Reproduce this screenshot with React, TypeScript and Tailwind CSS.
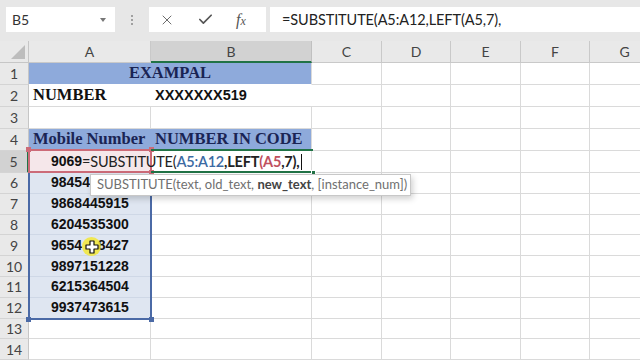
import { X, Check } from "lucide-react";

const cols = [
  { label: "A", w: "w-[122px]" },
  { label: "B", w: "w-[161px]" },
  { label: "C", w: "w-[70px]" },
  { label: "D", w: "w-[69px]" },
  { label: "E", w: "w-[70px]" },
  { label: "F", w: "w-[69px]" },
  { label: "G", w: "w-[70px]" },
];

const serif = "font-['Liberation_Serif',serif] font-bold text-[16.5px]";

function RowHead({ n, active }: { n: number; active?: boolean }) {
  return (
    <div
      className={
        "w-[29px] shrink-0 flex items-center justify-center border-b border-[#d4d4d4] text-[14px] text-[#444] " +
        (active
          ? "bg-[#d2d2d2] border-r-2 border-r-[#217346]"
          : "bg-[#e9e9e9] border-r border-r-[#c6c6c6]")
      }
    >
      {n}
    </div>
  );
}

function EmptyCells({ from = 2 }: { from?: number }) {
  return (
    <>
      {cols.slice(from).map((c) => (
        <div
          key={c.label}
          className={c.w + " shrink-0 border-r border-b border-[#dadada]"}
        />
      ))}
    </>
  );
}

function Row({
  n,
  tall,
  active,
  children,
}: {
  n: number;
  tall?: boolean;
  active?: boolean;
  children?: React.ReactNode;
}) {
  return (
    <div className={"flex " + (tall ? "h-[22px]" : "h-[20.8px]")}>
      <RowHead n={n} active={active} />
      {children}
      <EmptyCells />
    </div>
  );
}

function NumCell({ children }: { children: React.ReactNode }) {
  return (
    <div className="w-[122px] shrink-0 bg-[#dfe6f1] border-r border-b border-[#cfd8e6] flex items-center pl-[22px] font-['Liberation_Sans',sans-serif] font-bold text-[14px] text-[#111]">
      {children}
    </div>
  );
}

function Blank({ w = "w-[161px]" }: { w?: string }) {
  return <div className={w + " shrink-0 border-r border-b border-[#dadada]"} />;
}

// row 9 has two digits hidden under the mouse pointer
const numbers = ["98454", "9868445915", "6204535300", "9654_8427", "9897151228", "6215364504", "9937473615"];

export default function App() {
  return (
    <div className="relative w-[640px] h-[360px] overflow-hidden bg-white select-none font-['Lato',sans-serif]">
      {/* formula bar */}
      <div className="h-[41px] bg-[#e7e7e7] flex items-start pt-[7px] pl-[6px]">
        <div className="w-[109px] h-[25px] bg-white flex items-center justify-between px-[6px] text-[14px] text-[#333]">
          <span>B5</span>
          <span className="w-0 h-0 border-l-[3.5px] border-r-[3.5px] border-t-[4px] border-l-transparent border-r-transparent border-t-[#777] mr-[3px]" />
        </div>
        <div className="w-[34px] h-[25px] flex flex-col items-center justify-center gap-[2px]">
          <span className="w-[2px] h-[2px] bg-[#a0a0a0]" />
          <span className="w-[2px] h-[2px] bg-[#a0a0a0]" />
          <span className="w-[2px] h-[2px] bg-[#a0a0a0]" />
        </div>
        <div className="w-[117px] h-[25px] bg-white flex items-center pl-[10px] gap-[22px]">
          <X size={16} strokeWidth={1.3} className="text-[#555]" />
          <Check size={17} strokeWidth={2.4} className="text-[#555]" />
          <span className="font-['Liberation_Serif',serif] italic text-[16px] text-[#555]">
            f<span className="text-[12px]">x</span>
          </span>
        </div>
        <div className="ml-[4px] flex-1 h-[25px] bg-white flex items-center pl-[12px] text-[14.5px] text-[#222] tracking-[-0.1px]">
          =SUBSTITUTE(A5:A12,LEFT(A5,7),
        </div>
      </div>

      {/* column headers */}
      <div className="flex h-[22px]">
        <div className="w-[29px] shrink-0 bg-[#e9e9e9] border-r border-b border-[#c6c6c6] flex items-end justify-end p-[3px]">
          <svg width="14" height="14" viewBox="0 0 14 14">
            <polygon points="14,0 14,14 0,14" fill="#bdbdbd" />
          </svg>
        </div>
        {cols.map((c) => (
          <div
            key={c.label}
            className={
              c.w +
              " shrink-0 flex items-center justify-center text-[14px] text-[#444] " +
              (c.label === "B"
                ? "bg-[#d2d2d2] border-b-2 border-[#217346] border-r border-r-[#c0c0c0]"
                : "bg-[#e9e9e9] border-r border-b border-[#c9c9c9]")
            }
          >
            {c.label}
          </div>
        ))}
      </div>

      {/* rows */}
      <Row n={1} tall>
        <div className={"w-[283px] shrink-0 bg-[#8eaadb] border-r border-[#dadada] border-b border-b-white flex items-center justify-center text-[#1a2454] " + serif}>
          EXAMPAL
        </div>
      </Row>
      <Row n={2} tall>
        <div className={"w-[122px] shrink-0 border-b border-[#dadada] flex items-center pl-[4px] text-[#111] " + serif}>
          NUMBER
        </div>
        <div className="w-[161px] shrink-0 border-b border-[#dadada] flex items-center pl-[4px] font-['Liberation_Sans',sans-serif] font-bold text-[14.5px] text-[#111]">
          XXXXXXX519
        </div>
      </Row>
      <Row n={3} tall>
        <Blank w="w-[122px]" />
        <Blank />
      </Row>
      <Row n={4} tall>
        <div className={"w-[122px] shrink-0 bg-[#8eaadb] border-b border-[#dadada] flex items-center pl-[4px] text-[#1a2454] whitespace-nowrap " + serif}>
          Mobile Number
        </div>
        <div className={"w-[161px] shrink-0 bg-[#8eaadb] border-r border-b border-[#dadada] flex items-center pl-[4px] text-[#1a2454] whitespace-nowrap " + serif}>
          NUMBER IN CODE
        </div>
      </Row>
      <Row n={5} tall active>
        <div className="w-[122px] shrink-0 bg-[#f5e7ea] border-r border-b border-[#dadada] flex items-center pl-[22px] font-['Liberation_Sans',sans-serif] font-bold text-[14px] text-[#111]">
          9069
        </div>
        <Blank />
      </Row>
      {numbers.map((num, i) => (
        <Row key={num} n={6 + i}>
          <NumCell>
            {num.includes("_") ? (
              <>
                {num.split("_")[0]}
                <span className="inline-block w-[15.6px]" />
                {num.split("_")[1]}
              </>
            ) : (
              num
            )}
          </NumCell>
          <Blank />
        </Row>
      ))}
      <Row n={13}>
        <Blank w="w-[122px]" />
        <Blank />
      </Row>
      <Row n={14}>
        <Blank w="w-[122px]" />
        <Blank />
      </Row>

      {/* range highlight A5:A12 (blue) */}
      <div className="absolute left-[28px] top-[172px] w-[124px] h-[148px] border-2 border-t-0 border-[#4b6aa6] pointer-events-none">
        <span className="absolute -right-[4px] -bottom-[4px] w-[5px] h-[5px] bg-[#4b6aa6]" />
        <span className="absolute -left-[4px] -bottom-[4px] w-[5px] h-[5px] bg-[#4b6aa6]" />
      </div>
      {/* range highlight A5 (red) */}
      <div className="absolute left-[28px] top-[149px] w-[124px] h-[24px] border-2 border-[#cc6b78] pointer-events-none">
        <span className="absolute -left-[4px] -top-[4px] w-[5px] h-[5px] bg-[#cc6b78]" />
        <span className="absolute -right-[4px] -top-[4px] w-[5px] h-[5px] bg-[#cc6b78]" />
        <span className="absolute -right-[4px] -bottom-[4px] w-[5px] h-[5px] bg-[#cc6b78]" />
      </div>
      {/* active cell B5 */}
      <div className="absolute left-[151px] top-[149px] w-[162px] h-[24px] border-y-2 border-[#217346] pointer-events-none">
        <span className="absolute -right-[3px] -bottom-[4px] w-[5px] h-[5px] bg-[#217346] border border-white" />
      </div>

      {/* in-cell editor */}
      <div className="absolute left-[82px] top-[151px] h-[22px] flex items-center text-[14.5px] text-[#222] tracking-[-0.2px] whitespace-nowrap">
        <span>=SUBSTITUTE(</span>
        <span className="text-[#3b6aa3] font-semibold">A5:A12</span>
        <span className="font-bold">,LEFT</span>
        <span className="font-bold text-[#c0505e]">(A5</span>
        <span className="font-bold">,7),</span>
        <span className="ml-[1px] w-[1px] h-[16px] bg-[#111]" />
      </div>

      {/* function tooltip */}
      <div className="absolute left-[90px] top-[174px] w-[321px] h-[22px] bg-white border border-[#c8c8c8] shadow-[2px_3px_6px_rgba(0,0,0,0.18)] flex items-center pl-[6px] text-[13px] text-[#707070] whitespace-nowrap">
        SUBSTITUTE(text, old_text,&nbsp;<b className="text-[#444]">new_text</b>, [instance_num])
      </div>

      {/* mouse cursor */}
      <div className="absolute left-[82px] top-[237px] w-[19px] h-[19px] rounded-full bg-[#f3e737]/85 flex items-center justify-center">
        <svg width="14" height="14" viewBox="0 0 14 14">
          <path
            d="M5 1h4v4h4v4h-4v4h-4v-4h-4v-4h4z"
            fill="#fff"
            stroke="#111"
            strokeWidth="1.2"
            strokeLinejoin="round"
          />
        </svg>
      </div>
    </div>
  );
}
